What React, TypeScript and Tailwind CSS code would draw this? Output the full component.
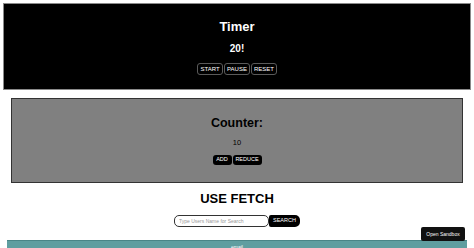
const font = "font-['Liberation_Sans',Arial,sans-serif]"

function TimerCard() {
  return (
    <div className="mx-[3px] mt-[3px] border border-[#8a8a8a] bg-black pt-[15px] pb-[14px] flex flex-col items-center text-white">
      <h2 className="text-[13px] leading-[16px] font-bold">Timer</h2>
      <p className="mt-[8px] text-[10px] leading-[12px] font-bold">20!</p>
      <div className="mt-[8px] flex gap-[1px]">
        {['START', 'PAUSE', 'RESET'].map((b) => (
          <button
            key={b}
            className="h-[12px] w-[26px] rounded-[3px] border border-[#5a5a5a] bg-black text-[6px] leading-none text-white"
          >
            {b}
          </button>
        ))}
      </div>
    </div>
  )
}

function CounterCard() {
  return (
    <div className="mx-[11px] mt-[8px] border border-[#333] bg-[#808080] pt-[16px] pb-[17px] flex flex-col items-center text-black">
      <h2 className="text-[12.5px] leading-[16px] font-bold">Counter:</h2>
      <p className="mt-[7px] text-[7.5px] leading-[10px]">10</p>
      <div className="mt-[7px] flex gap-[1px]">
        <button className="h-[10px] w-[19px] rounded-[3px] bg-black text-[5.5px] leading-none text-white">ADD</button>
        <button className="h-[10px] w-[29px] rounded-[3px] bg-black text-[5.5px] leading-none text-white">REDUCE</button>
      </div>
    </div>
  )
}

function UseFetch() {
  return (
    <div className="flex flex-col items-center">
      <h2 className="mt-[8px] text-[13px] leading-[16px] font-bold text-black">USE FETCH</h2>
      <div className="mt-[8px] flex">
        <input
          className="h-[12px] w-[95px] rounded-[5px] border border-[#333] bg-white px-[4px] text-[5px] outline-none placeholder:text-[#999]"
          placeholder="Type Users Name for Search"
        />
        <button className="h-[12px] w-[31px] rounded-r-[5px] rounded-l-[2px] bg-black text-[5.5px] leading-none text-white">
          SEARCH
        </button>
      </div>
      <div className="mt-[13px] mx-[7px] self-stretch h-[20px] bg-[#5f9ea0] border-t border-[#4a8587] flex justify-center">
        <span className="mt-[4px] text-[5px] leading-none text-white">email</span>
      </div>
    </div>
  )
}

export default function App() {
  return (
    <div className={`${font} relative min-h-[248px] overflow-hidden bg-white`}>
      <TimerCard />
      <CounterCard />
      <UseFetch />
      <button className="absolute left-[421px] top-[227px] h-[14px] w-[44px] rounded-[2px] bg-[#111] text-[5px] leading-none text-white">
        Open Sandbox
      </button>
    </div>
  )
}
